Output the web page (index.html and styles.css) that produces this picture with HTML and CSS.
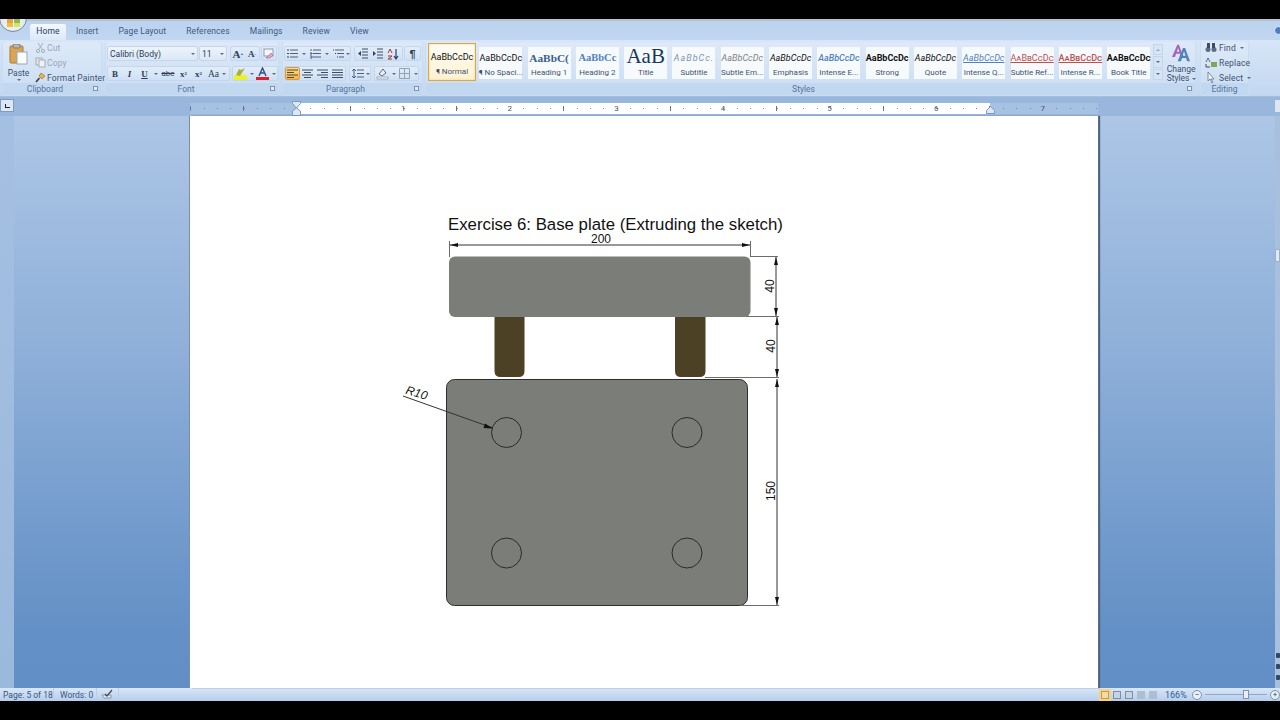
FILE: index.html
```html
<!DOCTYPE html>
<html lang="en">
<head>
    <meta charset="UTF-8">
    <title>Exercise 6 - Word</title>
    <link rel="stylesheet" href="styles.css">
</head>
<body>
    <div class="letterbox-top"></div>
    <div class="window">
        <div class="office-orb">
            <svg width="13" height="8" viewBox="0 0 13 8"><rect x="0" y="0" width="6" height="4" fill="#e8a33a"/><rect x="7" y="0" width="6" height="4" fill="#8cbf3f"/><rect x="0" y="4" width="6" height="4" fill="#e9c23c"/><rect x="7" y="4" width="6" height="4" fill="#d9e26a"/></svg>
        </div>
        <div class="help-dot"></div>

        <div class="tabs">
            <span class="tab active">Home</span>
            <span class="tab">Insert</span>
            <span class="tab">Page Layout</span>
            <span class="tab">References</span>
            <span class="tab">Mailings</span>
            <span class="tab">Review</span>
            <span class="tab">View</span>
        </div>

        <div class="ribbon">
            <div class="group clipboard">
                <div class="group-body clip-body">
                    <div class="paste">
                        <svg width="19" height="21" viewBox="0 0 19 21"><rect x="1" y="2" width="13" height="17" rx="1" fill="#dba653" stroke="#a97a35"/><rect x="4" y="0" width="7" height="4" rx="1" fill="#b8b8b0" stroke="#84796a"/><rect x="8" y="8" width="10" height="12" fill="#fbfcfe" stroke="#9aa6b6"/></svg>
                        <span>Paste</span>
                        <i class="caret"></i>
                    </div>
                    <div class="clip-list">
                        <span class="clip-item off"><svg width="11" height="11" viewBox="0 0 11 11"><path d="M3 1l4 6M8 1L4 7" stroke="#a6adb8" fill="none"/><circle cx="3" cy="9" r="1.6" fill="none" stroke="#a6adb8"/><circle cx="8" cy="9" r="1.6" fill="none" stroke="#a6adb8"/></svg>Cut</span>
                        <span class="clip-item off"><svg width="11" height="11" viewBox="0 0 11 11"><rect x="1" y="1" width="6" height="7" fill="#dfe6ef" stroke="#a6adb8"/><rect x="4" y="3" width="6" height="7" fill="#eef2f7" stroke="#a6adb8"/></svg>Copy</span>
                        <span class="clip-item"><svg width="11" height="11" viewBox="0 0 11 11"><path d="M6 1l4 3-3 3-3-3z" fill="#e3b64a" stroke="#8a6b26" stroke-width=".6"/><path d="M4.500 6L1 10" stroke="#444" stroke-width="1.800"/></svg>Format Painter</span>
                    </div>
                </div>
                <div class="group-label">Clipboard<i class="launcher"></i></div>
            </div>

            <div class="group font">
                <div class="group-body">
                    <div class="tool-row">
                        <span class="combo font-name">Calibri (Body)<i class="caret"></i></span>
                        <span class="combo font-size">11<i class="caret"></i></span>
                        <span class="tool-set grow-set">
                            <span class="tool w14 serif-b big">A<sup>+</sup></span>
                            <span class="tool w14 serif-b">A<sup>-</sup></span>
                        </span>
                        <span class="tool-set"><span class="tool w14 tiny">
                            <svg width="12" height="12" viewBox="0 0 12 12"><rect x="1" y="1" width="9" height="7" fill="#f4f6fa" stroke="#8d9bb0"/><path d="M3 10l5-5 2 2-3 3z" fill="#e6a6c0" stroke="#9b6a86" stroke-width=".6"/></svg>
                        </span></span>
                    </div>
                    <div class="tool-row">
                        <span class="tool-set fmt-set">
                            <span class="tool w14 bold">B</span>
                            <span class="tool w15 ital">I</span>
                            <span class="tool w15 under">U</span>
                            <span class="tool w8"><i class="caret"></i></span>
                            <span class="tool w16 strike">abc</span>
                            <span class="tool w15 bold small">x<sub>2</sub></span>
                            <span class="tool w15 bold small">x<sup>2</sup></span>
                            <span class="tool w15 aa">Aa</span>
                            <span class="tool w6"><i class="caret"></i></span>
                        </span>
                        <span class="tool-set color-set">
                            <span class="tool w15"><svg width="13" height="13" viewBox="0 0 13 13"><rect x="0" y="8" width="13" height="5" fill="#eaf02e"/><path d="M2 8l3-6 2 1 4-2-5 8z" fill="#a7b23c"/></svg></span>
                            <span class="tool w7"><i class="caret"></i></span>
                            <span class="tool w15"><svg width="13" height="13" viewBox="0 0 13 13"><rect x="0" y="10" width="13" height="3" fill="#d8222a"/><path d="M3 9l3.500-8 3.500 8M4.500 6h4" fill="none" stroke="#2f4f86" stroke-width="1.400"/></svg></span>
                            <span class="tool w7"><i class="caret"></i></span>
                        </span>
                    </div>
                </div>
                <div class="group-label label-font">Font<i class="launcher"></i></div>
            </div>

            <div class="group paragraph">
                <div class="group-body">
                    <div class="tool-row">
                        <span class="tool-set list-set">
                            <span class="tool w15"><svg width="11" height="11" viewBox="0 0 11 11"><path d="M3 2h8M3 5.500h8M3 9h8" stroke="#4f5f78"/><path d="M0 2h2M0 5.500h2M0 9h2" stroke="#27446e"/></svg></span><span class="tool w8"><i class="caret"></i></span>
                            <span class="tool w15"><svg width="11" height="11" viewBox="0 0 11 11"><path d="M3 2h8M3 5.500h8M3 9h8" stroke="#4f5f78"/><path d="M1 1v2M0 5h2v1H0M0 8h2v2H0" stroke="#27446e" stroke-width=".8" fill="none"/></svg></span><span class="tool w8"><i class="caret"></i></span>
                            <span class="tool w15"><svg width="12" height="11" viewBox="0 0 12 11"><path d="M2 2h9M4 5.500h7M6 9h5" stroke="#4f5f78"/><path d="M0 2h1M2 5.500h1M4 9h1" stroke="#27446e"/></svg></span><span class="tool w4"><i class="caret"></i></span>
                        </span>
                        <span class="tool-set indent-set">
                            <span class="tool w15"><svg width="11" height="11" viewBox="0 0 11 11"><path d="M5 1h6M5 4h6M5 7h6M5 10h6" stroke="#3e4d64"/><path d="M4 3L1 5.500 4 8z" fill="#27446e"/></svg></span>
                            <span class="tool w15"><svg width="11" height="11" viewBox="0 0 11 11"><path d="M5 1h6M5 4h6M5 7h6M5 10h6" stroke="#3e4d64"/><path d="M1 3l3 2.500L1 8z" fill="#27446e"/></svg></span>
                            <span class="tool w15 sort">
                                <svg width="12" height="12" viewBox="0 0 12 12"><path d="M9 1v9M7 8l2 3 2-3" stroke="#27446e" fill="none" stroke-width="1.200"/><path d="M1 5l2-4 2 4M1 8h4L1 11h4" stroke="#a83838" fill="none"/></svg>
                            </span>
                        </span>
                        <span class="tool-set"><span class="tool w15 pilcrow">&para;</span></span>
                    </div>
                    <div class="tool-row">
                        <span class="tool-set align-set">
                            <span class="tool w15 selected"><svg width="11" height="10" viewBox="0 0 11 10"><path d="M0 1h11M0 3.500h7M0 6h11M0 8.500h7" stroke="#594c2e" stroke-width="1.200"/></svg></span>
                            <span class="tool w15"><svg width="11" height="10" viewBox="0 0 11 10"><path d="M0 1h11M2 3.500h7M0 6h11M2 8.500h7" stroke="#3e4d64" stroke-width="1.200"/></svg></span>
                            <span class="tool w15"><svg width="11" height="10" viewBox="0 0 11 10"><path d="M0 1h11M4 3.500h7M0 6h11M4 8.500h7" stroke="#3e4d64" stroke-width="1.200"/></svg></span>
                            <span class="tool w15"><svg width="11" height="10" viewBox="0 0 11 10"><path d="M0 1h11M0 3.500h11M0 6h11M0 8.500h11" stroke="#3e4d64" stroke-width="1.200"/></svg></span>
                        </span>
                        <span class="tool-set spacing-set">
                            <span class="tool w15"><svg width="12" height="11" viewBox="0 0 12 11"><path d="M5 2h7M5 5.500h7M5 9h7" stroke="#4f5f78"/><path d="M2 1v9M0 3l2-2 2 2M0 8l2 2 2-2" stroke="#27446e" fill="none" stroke-width=".8"/></svg></span><span class="tool w6"><i class="caret"></i></span>
                        </span>
                        <span class="tool-set shade-set">
                            <span class="tool w15"><svg width="13" height="13" viewBox="0 0 13 13"><path d="M3 7l4-5 3 4-4 3z" fill="#e8eef6" stroke="#5b6b83"/><rect x="1" y="10" width="11" height="2" fill="#f2f4f8" stroke="#7d8ca2" stroke-width=".6"/></svg></span><span class="tool w7"><i class="caret"></i></span>
                            <span class="tool w15"><svg width="11" height="11" viewBox="0 0 11 11"><path d="M.5.500h10v10H.5zM.5 5.500h10M5.500.500v10" fill="none" stroke="#93a2b8"/></svg></span><span class="tool w7"><i class="caret"></i></span>
                        </span>
                    </div>
                </div>
                <div class="group-label">Paragraph<i class="launcher"></i></div>
            </div>

            <div class="group styles">
                <div class="group-body styles-body">
                    <div class="gallery">
                        <div class="style-cell current"><span class="sample">AaBbCcDc</span><span class="style-name">&para; Normal</span></div>
                        <div class="style-cell"><span class="sample">AaBbCcDc</span><span class="style-name">&para; No Spaci...</span></div>
                        <div class="style-cell"><span class="sample s-h1">AaBbC(</span><span class="style-name">Heading 1</span></div>
                        <div class="style-cell"><span class="sample s-h2">AaBbCc</span><span class="style-name">Heading 2</span></div>
                        <div class="style-cell"><span class="sample s-title">AaB</span><span class="style-name">Title</span></div>
                        <div class="style-cell"><span class="sample s-sub">AaBbCc.</span><span class="style-name">Subtitle</span></div>
                        <div class="style-cell"><span class="sample s-subem">AaBbCcDc</span><span class="style-name">Subtle Em...</span></div>
                        <div class="style-cell"><span class="sample s-em">AaBbCcDc</span><span class="style-name">Emphasis</span></div>
                        <div class="style-cell"><span class="sample s-intem">AaBbCcDc</span><span class="style-name">Intense E...</span></div>
                        <div class="style-cell"><span class="sample s-strong">AaBbCcDc</span><span class="style-name">Strong</span></div>
                        <div class="style-cell"><span class="sample s-quote">AaBbCcDc</span><span class="style-name">Quote</span></div>
                        <div class="style-cell"><span class="sample s-intq">AaBbCcDc</span><span class="style-name">Intense Q...</span></div>
                        <div class="style-cell"><span class="sample s-subref">AaBbCcDc</span><span class="style-name">Subtle Ref...</span></div>
                        <div class="style-cell"><span class="sample s-intref">AaBbCcDc</span><span class="style-name">Intense R...</span></div>
                        <div class="style-cell"><span class="sample s-book">AaBbCcDc</span><span class="style-name">Book Title</span></div>
                    </div>
                    <div class="gallery-arrows">
                        <span><i class="caret up"></i></span>
                        <span><i class="caret"></i></span>
                        <span><i class="caret more"></i></span>
                    </div>
                    <div class="change-styles">
                        <svg width="22" height="20" viewBox="0 0 24 22"><path d="M1 16L7.500 1h2L15 16h-3l-1.200-4H6l-1.300 4zM6.800 9.500h3.200L8.500 5z" fill="#a565b8"/><path d="M8 21L14.500 5h2.500L23 21h-3.500l-1.200-4h-5l-1.300 4zM13.800 14.500h3.800L15.700 9z" fill="#4f81bd"/></svg>
                        <span>Change<br>Styles <i class="caret"></i></span>
                    </div>
                </div>
                <div class="group-label">Styles<i class="launcher"></i></div>
            </div>

            <div class="group editing">
                <div class="group-body edit-list">
                    <span class="edit-item"><svg width="12" height="11" viewBox="0 0 12 11"><circle cx="3" cy="7.500" r="2.500" fill="#5c6c84"/><circle cx="9" cy="7.500" r="2.500" fill="#5c6c84"/><rect x="2" y="1" width="3" height="5" fill="#3e4c62"/><rect x="7" y="1" width="3" height="5" fill="#3e4c62"/></svg>Find <i class="caret"></i></span>
                    <span class="edit-item"><svg width="12" height="11" viewBox="0 0 12 11"><path d="M1 5l2-4 2 4" fill="none" stroke="#5c6c84"/><rect x="6" y="5" width="6" height="5" fill="#7fa65a"/><path d="M1 7v3h4" fill="none" stroke="#3e4c62"/></svg>Replace</span>
                    <span class="edit-item"><svg width="12" height="11" viewBox="0 0 12 11"><path d="M3 0v9l2-2 2 4 1-1-2-3h3z" fill="#eef2f8" stroke="#5c6c84" stroke-width=".7"/></svg>Select <i class="caret"></i></span>
                </div>
                <div class="group-label editing-label">Editing</div>
            </div>
        </div>

        <div class="ruler-row">
            <span class="tab-stop"><i></i></span>
            <div class="ruler">
                <div class="ruler-white"></div>
                <div class="ruler-marks">
                    <span>1</span><span></span><span>1</span><span>2</span><span>3</span><span>4</span><span>5</span><span>6</span><span>7</span>
                </div>
                <svg class="indent-mark left" width="9" height="15" viewBox="0 0 9 15"><path d="M.5.500h8v2L4.500 7l4 3v4.500h-8V10l4-3-4-4.500z" fill="#dce8f6" stroke="#8099ba"/></svg>
                <svg class="indent-mark right" width="9" height="8" viewBox="0 0 9 8"><path d="M4.500.500l4 4v3h-8v-3z" fill="#dce8f6" stroke="#8099ba"/></svg>
            </div>
        </div>

        <div class="workspace">
            <div class="v-ruler"></div>
            <div class="desk">
                <div class="page">
                    <svg class="drawing" width="908" height="572" viewBox="190 116 908 572">
                        <defs>
                            <marker id="arrow" markerWidth="8" markerHeight="4" refX="8" refY="2" orient="auto-start-reverse" markerUnits="userSpaceOnUse">
                                <path d="M0 0L8 2 0 4z" fill="#111"/>
                            </marker>
                        </defs>

                        <text class="ex-title" x="448" y="230">Exercise 6: Base plate (Extruding the sketch)</text>

                        <!-- top view plate + legs -->
                        <rect class="plate" x="449" y="256.500" width="301.500" height="60.500" rx="6"/>
                        <path class="leg" d="M494.500 317h30v54q0 6-6 6h-18q-6 0-6-6z"/>
                        <path class="leg" d="M675 317h30.500v54q0 6-6 6H681q-6 0-6-6z"/>

                        <!-- bottom plate + holes -->
                        <rect class="base" x="446.500" y="379.500" width="301" height="226" rx="8"/>
                        <circle class="hole" cx="506.500" cy="432.500" r="15"/>
                        <circle class="hole" cx="687" cy="432.500" r="15"/>
                        <circle class="hole" cx="506.500" cy="553" r="15"/>
                        <circle class="hole" cx="687" cy="553" r="15"/>

                        <!-- dimensions -->
                        <path class="ext" d="M449.500 241v16M750.500 241v16M750 256.500h28M746 316.500h33M705 377.500h74M742 605.500h37"/>
                        <line class="dim" x1="450" y1="245" x2="750" y2="245" marker-start="url(#arrow)" marker-end="url(#arrow)"/>
                        <line class="dim" x1="776" y1="257" x2="776" y2="316" marker-start="url(#arrow)" marker-end="url(#arrow)"/>
                        <line class="dim" x1="777" y1="317" x2="777" y2="377" marker-start="url(#arrow)" marker-end="url(#arrow)"/>
                        <line class="dim" x1="777" y1="379" x2="777" y2="605" marker-start="url(#arrow)" marker-end="url(#arrow)"/>
                        <path class="dim" d="M403 396l90 32"/>
                        <path d="M493 428.500l-9.500-.5 1.500-4.500z" fill="#111"/>

                        <text class="dim-text" x="601" y="243" text-anchor="middle">200</text>
                        <text class="dim-text" transform="translate(774 286) rotate(-90)" text-anchor="middle">40</text>
                        <text class="dim-text" transform="translate(775 346) rotate(-90)" text-anchor="middle">40</text>
                        <text class="dim-text" transform="translate(775 491) rotate(-90)" text-anchor="middle">150</text>
                        <text class="dim-text italic" transform="translate(405 393.500) rotate(17)">R10</text>
                    </svg>
                </div>
            </div>
            <div class="v-scroll">
                <span class="ruler-toggle"></span>
                <span class="thumb"></span>
                <span class="nav-arrows"><i></i><i></i><i></i></span>
            </div>
        </div>

        <div class="statusbar">
            <span class="status-cell page-count">Page: 5 of 18</span>
            <span class="status-cell word-count">Words: 0</span>
            <span class="status-cell proof">
                <svg width="13" height="11" viewBox="0 0 13 11"><path d="M1 6h9v3H3z" fill="#e8edf4" stroke="#76849a" stroke-width=".8"/><path d="M4 5l2 2 5-6" fill="none" stroke="#3e4c62" stroke-width="1.200"/></svg>
            </span>
            <span class="status-right">
                <span class="view-btn selected"></span>
                <span class="view-btn"></span>
                <span class="view-btn"></span>
                <span class="view-btn dim-btn"></span>
                <span class="view-btn dim-btn"></span>
                <span class="zoom-level">166%</span>
                <span class="zoom-btn">&minus;</span>
                <span class="zoom-track"><i></i></span>
                <span class="zoom-btn">+</span>
            </span>
        </div>
    </div>
    <div class="letterbox-bottom"></div>
</body>
</html>
```
FILE: styles.css
```css
* {
    box-sizing: border-box;
}
html, body {
    margin: 0;
    padding: 0;
    width: 1280px;
    height: 720px;
    overflow: hidden;
    background: #000;
}
body {
    display: flex;
    flex-direction: column;
    font-family: Roboto, "Liberation Sans", sans-serif;
    font-size: 8.500px;
    color: #3d5270;
}
i {
    font-style: normal;
}
.letterbox-top {
    height: 19px;
    background: #000;
}
.letterbox-bottom {
    height: 19px;
    background: #000;
}
.window {
    position: relative;
    height: 682px;
    display: flex;
    flex-direction: column;
    overflow: hidden;
    background: #bdd4ef;
}

/* title bar bits */
.office-orb {
    position: absolute;
    left: -1px;
    top: -15px;
    width: 28px;
    height: 28px;
    border-radius: 50%;
    background: radial-gradient(circle at 50% 70%, #f4f7fb 0%, #dfe6ef 60%, #8b97a8 100%);
    border: 1px solid #7d8898;
    display: flex;
    align-items: flex-end;
    justify-content: center;
    padding-bottom: 4px;
}
.help-dot {
    position: absolute;
    right: -3px;
    top: 7px;
    width: 9px;
    height: 9px;
    border-radius: 50%;
    background: #4d7fc2;
    border: 1px solid #e7eef8;
}
.caret {
    display: inline-block;
    width: 0;
    height: 0;
    border-left: 2px solid transparent;
    border-right: 2px solid transparent;
    border-top: 2px solid #5b6b83;
    vertical-align: middle;
}
.caret.up {
    border-top: 0;
    border-bottom: 2px solid #9aa8bb;
}
.caret.more {
    border-top-color: #5b6b83;
    box-shadow: 0 -2px 0 -1px #5b6b83;
}

/* tabs */
.tabs {
    height: 21px;
    padding: 3px 0 0 30px;
    display: flex;
    border-top: 2px solid #b9c2cc;
    background: linear-gradient(#bcd3ef, #c0d6f1);
}
.tab {
    height: 16px;
    line-height: 15px;
    padding: 0 10px;
    font-size: 8.500px;
    letter-spacing: .1px;
    color: #3d5a82;
}
.tab.active {
    width: 36px;
    padding: 0;
    text-align: center;
    background: linear-gradient(#f5f9fe, #dbe8f8);
    border-radius: 2px 2px 0 0;
    color: #20406b;
}

/* ribbon */
.ribbon {
    height: 57px;
    padding: 2px 2px 0;
    display: flex;
    gap: 3px;
    background: linear-gradient(#d7e5f7, #c2d8f1);
    border-bottom: 1px solid #a3bfdf;
}
.group {
    display: flex;
    flex-direction: column;
    border: 1px solid #c9dcf2;
    border-top: 0;
    border-radius: 3px;
    background: linear-gradient(#dde9f8 0%, #cfe0f4 75%, #c3d9f0 100%);
}
.group-body {
    flex: 1;
    min-height: 0;
}
.group-label {
    position: relative;
    height: 12px;
    line-height: 13px;
    text-align: center;
    padding-right: 14px;
    font-size: 8.500px;
    color: #55749c;
    background: #c2d8f0;
}
.label-font {
    padding-right: 12px;
}
.editing-label {
    padding-right: 0;
}
.launcher {
    position: absolute;
    right: 3px;
    top: 3px;
    width: 5px;
    height: 5px;
    border: 1px solid #7d93b1;
    background: #e5eef9;
}
.clipboard {
    width: 100px;
}
.font {
    width: 174px;
}
.paragraph {
    width: 141px;
}
.styles {
    width: 771px;
    margin-left: -1px;
}
.editing {
    width: 49px;
    margin-left: 1px;
}

/* clipboard */
.clip-body {
    display: flex;
    padding: 0 0 0 6px;
}
.paste {
    width: 19px;
    display: flex;
    flex-direction: column;
    align-items: center;
    padding-top: 2px;
    font-size: 8.500px;
    color: #3d5270;
}
.paste svg {
    flex: none;
    margin-bottom: 1px;
}
.paste span {
    line-height: 11px;
    margin-top: 2px;
}
.clip-list {
    margin-left: 7px;
    display: flex;
    flex-direction: column;
    gap: 4px;
}
.clip-item {
    display: flex;
    align-items: center;
    gap: 1px;
    height: 11px;
    letter-spacing: .15px;
    white-space: nowrap;
}
.clip-item svg {
    flex: none;
}
.clip-item.off {
    color: #9aa7b8;
}

/* small toolbar rows */
.tool-row {
    display: flex;
    height: 14px;
    margin: 4px 0 0 1px;
    gap: 1px;
}
.tool-row + .tool-row {
    margin-top: 6px;
}
.tool-set, .combo {
    display: flex;
    align-items: center;
    height: 15px;
    border: 1px solid #c4d6ec;
    border-radius: 2px;
    background: linear-gradient(#e3edf9, #cfe0f4);
}
.combo {
    justify-content: space-between;
    padding: 0 2px;
    background: linear-gradient(#eef4fc, #dbe7f6);
    font-size: 8.500px;
    color: #2b3e5b;
}
.font-name {
    width: 91px;
}
.font-size {
    width: 28px;
}
.grow-set {
    margin-left: 2px;
    width: 30px;
}
.fmt-set {
    width: 124px;
}
.color-set {
    margin-left: 1px;
    width: 46px;
}
.list-set {
    width: 67px;
}
.indent-set {
    margin-left: 2px;
    width: 49px;
}
.align-set {
    width: 62px;
}
.spacing-set {
    margin-left: 2px;
    width: 22px;
}
.shade-set {
    margin-left: 2px;
    width: 45px;
}
.tool {
    display: flex;
    align-items: center;
    justify-content: center;
    height: 100%;
    flex: none;
    font-size: 9px;
    color: #2b3e5b;
}
.w4 { width: 4px; }
.w6 { width: 6px; }
.w7 { width: 7px; }
.w8 { width: 8px; }
.w14 { width: 14px; }
.w15 { width: 15px; }
.w16 { width: 16px; }
.tool sup, .tool sub {
    font-size: 5px;
    line-height: 0;
}
.bold {
    font-family: "Liberation Serif", serif;
    font-weight: bold;
}
.small {
    font-size: 9px;
}
.ital {
    font-family: "Liberation Serif", serif;
    font-style: italic;
    font-weight: bold;
}
.under {
    font-family: "Liberation Serif", serif;
    font-weight: bold;
    text-decoration: underline;
}
.strike {
    font-size: 8px;
    text-decoration: line-through;
}
.aa {
    font-family: "Liberation Serif", serif;
    font-size: 9.500px;
}
.serif-b {
    font-family: "Liberation Serif", serif;
    font-weight: bold;
    font-size: 9px;
}
.serif-b.big {
    font-size: 11px;
}
.pilcrow {
    font-family: "Liberation Sans", sans-serif;
    font-weight: bold;
    font-size: 11px;
}
.tool.selected {
    background: linear-gradient(#fbd98e, #f5b54d);
    border: 1px solid #d59b45;
    border-radius: 2px;
}

/* styles gallery */
.styles-body {
    display: flex;
    padding: 4px 0 0 2px;
}
.gallery {
    display: flex;
    gap: 5.300px;
    height: 34px;
}
.style-cell {
    width: 43px;
    height: 32px;
    margin-top: 1px;
    background: #f7fafd;
    display: flex;
    flex-direction: column;
    align-items: center;
}
.style-cell.current {
    width: 48px;
    height: 38px;
    margin: -3px -2px 0 0;
    border: 1px solid #d9a84e;
    background: linear-gradient(#fffdf6, #fff2d0);
    box-shadow: inset 0 0 2px #f5c55f;
}
.sample {
    height: 21px;
    line-height: 22px;
    font-size: 9px;
    color: #111;
    white-space: nowrap;
}
.style-cell.current .sample {
    margin-top: 2px;
}
.style-name {
    font-size: 8px;
    line-height: 10px;
    color: #3d5270;
    white-space: nowrap;
}
.s-h1 {
    font-family: "Liberation Serif", serif;
    font-weight: bold;
    font-size: 11.300px;
    color: #365f91;
}
.s-h2 {
    font-family: "Liberation Serif", serif;
    font-weight: bold;
    font-size: 10.500px;
    color: #4f81bd;
}
.s-title {
    font-family: "Liberation Serif", serif;
    font-size: 21px;
    line-height: 19px;
    color: #17365d;
}
.s-sub {
    font-style: italic;
    color: #7f93b0;
    letter-spacing: 1px;
}
.s-subem {
    font-style: italic;
    color: #808080;
}
.s-em {
    font-style: italic;
}
.s-intem {
    font-style: italic;
    font-weight: 500;
    color: #4f81bd;
}
.s-strong {
    font-weight: bold;
}
.s-quote {
    font-style: italic;
}
.s-intq {
    font-style: italic;
    color: #4f81bd;
    text-decoration: underline;
}
.s-subref {
    font-variant: small-caps;
    color: #c0504d;
    text-decoration: underline;
}
.s-intref {
    font-variant: small-caps;
    font-weight: 500;
    color: #c0504d;
    text-decoration: underline;
}
.s-book {
    font-variant: small-caps;
    font-weight: bold;
}
.gallery-arrows {
    flex: none;
    width: 10px;
    margin: -2px 0 0 3px;
    height: 36px;
    display: flex;
    flex-direction: column;
    gap: 1px;
}
.gallery-arrows span {
    flex: 1;
    background: #d6e4f5;
    border: 1px solid #c4d6ec;
    display: flex;
    align-items: center;
    justify-content: center;
}
.change-styles {
    flex: none;
    width: 36px;
    display: flex;
    flex-direction: column;
    align-items: center;
    margin-top: -2px;
    line-height: 9px;
    text-align: center;
}
.change-styles svg {
    margin-bottom: 3px;
}

/* editing */
.edit-list {
    display: flex;
    flex-direction: column;
    gap: 4px;
    padding: 0 0 0 4px;
}
.edit-item {
    display: flex;
    align-items: center;
    gap: 2px;
    height: 11px;
    letter-spacing: .15px;
    white-space: nowrap;
}
.edit-item svg {
    flex: none;
}
.edit-item .caret {
    margin-left: 2px;
}

/* ruler */
.ruler-row {
    height: 19px;
    flex: none;
    display: flex;
    align-items: flex-start;
    background: #99b6dc;
}
.tab-stop {
    width: 14px;
    height: 13px;
    margin-top: 2px;
    background: #dbe7f6;
    border: 1px solid #7f9cc4;
    display: flex;
    align-items: center;
    justify-content: center;
}
.tab-stop i {
    width: 5px;
    height: 4px;
    border-left: 1px solid #222;
    border-bottom: 1px solid #222;
}
.ruler {
    position: relative;
    width: 908px;
    height: 11px;
    margin: 6px 0 0 176px;
    background: #a7c1e3;
}
.ruler-white {
    position: absolute;
    left: 106px;
    width: 694px;
    top: 0;
    bottom: 0;
    background: #fff;
}
.ruler-marks {
    position: relative;
    height: 100%;
    display: flex;
    margin-left: -53.300px;
    clip-path: inset(0 0 0 53.300px);
    background:
        repeating-linear-gradient(90deg, #7a889c 0 1px, transparent 1px 13.325px) 0 5px / 100% 1px no-repeat;
}
.ruler-marks span {
    flex: 0 0 106.600px;
    text-align: center;
    font-size: 8px;
    line-height: 11px;
    color: #4d5b70;
    background: linear-gradient(#66758c, #66758c) 0 3px / 1px 5px no-repeat;
}
.indent-mark {
    position: absolute;
    left: 102px;
    top: -2px;
}
.indent-mark.right {
    left: 796px;
    top: 3px;
}

/* document */
.workspace {
    flex: 1;
    min-height: 0;
    display: flex;
    position: relative;
}
.v-ruler {
    width: 14px;
    background: linear-gradient(#a4bfe2, #9bb9dd);
}
.desk {
    flex: 1;
    padding-left: 176px;
    background: linear-gradient(#adc6e6 0%, #8fb0d9 40%, #6390c6 90%, #6290c6 100%);
}
.page {
    width: 908px;
    height: 100%;
    background: #fff;
    box-shadow: 1px 0 0 #5e6e85, 2px 0 1px #46628c, -1px 0 0 #7d8da5;
    overflow: hidden;
}
.drawing {
    display: block;
}
.ex-title {
    font-family: "Liberation Sans", sans-serif;
    font-size: 16.800px;
    fill: #111;
}
.plate {
    fill: #7b7d79;
}
.leg {
    fill: #4c4124;
}
.base {
    fill: #7b7d79;
    stroke: #2e2e2e;
    stroke-width: 1;
}
.hole {
    fill: none;
    stroke: #2b2b2b;
    stroke-width: 1;
}
.ext {
    fill: none;
    stroke: #6c6c6c;
    stroke-width: 1;
}
.dim {
    fill: none;
    stroke: #333;
    stroke-width: 1;
}
.dim-text {
    font-family: "Liberation Sans", sans-serif;
    font-size: 12px;
    fill: #111;
}
.dim-text.italic {
    font-style: italic;
}

/* right scrollbar strip */
.v-scroll {
    width: 5px;
    position: relative;
    display: flex;
    flex-direction: column;
    background: #a8c0de;
}
.ruler-toggle {
    position: absolute;
    top: -16px;
    left: 0;
    width: 5px;
    height: 12px;
    background: #dde6f1;
}
.thumb {
    position: absolute;
    top: 133px;
    left: 0;
    width: 5px;
    height: 13px;
    background: #e3e9f1;
    border: 1px solid #9ab0cf;
}
.nav-arrows {
    position: absolute;
    bottom: 8px;
    left: 1px;
    display: flex;
    flex-direction: column;
    gap: 6px;
}
.nav-arrows i {
    width: 4px;
    height: 5px;
    background: #33475f;
    border-radius: 1px;
}

/* status bar */
.statusbar {
    height: 13px;
    flex: none;
    display: flex;
    align-items: center;
    background: linear-gradient(#d9e7f7, #b5cdeb);
    color: #3a5680;
}
.status-cell {
    height: 100%;
    display: flex;
    align-items: center;
    border-right: 1px solid #bacfe8;
}
.page-count {
    width: 54px;
    padding-left: 3px;
}
.word-count {
    width: 43px;
    padding-left: 6px;
}
.proof {
    width: 22px;
    padding-left: 4px;
}
.status-right {
    margin-left: auto;
    display: flex;
    align-items: center;
    height: 100%;
}
.view-btn {
    width: 8px;
    height: 8px;
    margin: 0 2px;
    border: 1px solid #7f8fa5;
    background: #c7d3e2;
}
.view-btn.selected {
    border-color: #c79a3e;
    background: #f1dca8;
    box-shadow: 0 0 0 2px #f6d38d;
}
.dim-btn {
    background: #aebed2;
    border-color: #aebed2;
}
.zoom-level {
    width: 28px;
    margin-left: 3px;
    padding-left: 3px;
    font-size: 9px;
    color: #2e5a96;
}
.zoom-btn {
    width: 10px;
    height: 10px;
    border-radius: 50%;
    border: 1px solid #7f93b1;
    background: #e8eff9;
    font-size: 8px;
    line-height: 7px;
    text-align: center;
    color: #33475f;
    margin-left: 2px;
}
.zoom-track {
    position: relative;
    width: 62px;
    height: 1px;
    margin: 0 1px 0 3px;
    background: #8fa7c8;
}
.zoom-track i {
    position: absolute;
    left: 38px;
    top: -4px;
    width: 6px;
    height: 9px;
    background: #e8eff9;
    border: 1px solid #7f93b1;
}
```
